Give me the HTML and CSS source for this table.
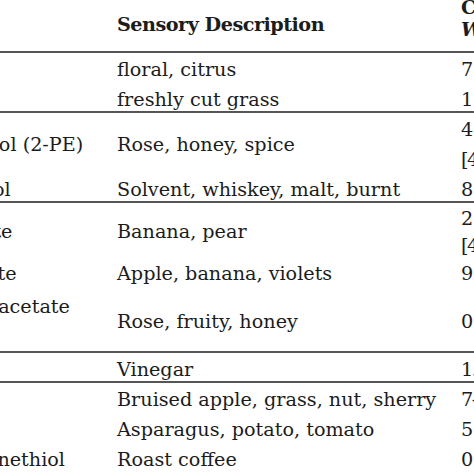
FILE: index.html
```html
<!DOCTYPE html>
<html>
<head>
<meta charset="utf-8">
<link rel="stylesheet" href="styles.css">
</head>
<body>
<div class="table">
  <div class="head">
    <div class="c1"></div>
    <div class="c2 hd">Sensory Description</div>
    <div class="c3 hd3"><div>Concentration in</div><div class="it">Wine (mg/L)</div></div>
  </div>
  <div class="group">
    <div class="c1"><span class="t">Linalool</span></div>
    <div class="c2"><span class="t">floral, citrus</span></div>
    <div class="c3"><span class="t">7</span></div>
    <div class="c1"><span class="t">cis-3-Hexenol</span></div>
    <div class="c2"><span class="t">freshly cut grass</span></div>
    <div class="c3"><span class="t">1</span></div>
  </div>
  <div class="group">
    <div class="c1"><span class="t">2-Phenylethanol <span class="nw">(2-PE)</span></span></div>
    <div class="c2"><span class="t">Rose, honey, spice</span></div>
    <div class="c3"><span class="t">4</span><br><span class="t">[4</span></div>
    <div class="c1"><span class="t">Isoamyl alcohol</span></div>
    <div class="c2"><span class="t">Solvent, whiskey, malt, burnt</span></div>
    <div class="c3"><span class="t">8</span></div>
  </div>
  <div class="group g3">
    <div class="c1"><span class="t">Isoamyl acetate</span></div>
    <div class="c2"><span class="t">Banana, pear</span></div>
    <div class="c3 tight"><span class="t">2</span><br><span class="t">[4</span></div>
    <div class="c1"><span class="t">Ethyl hexanoate</span></div>
    <div class="c2"><span class="t">Apple, banana, violets</span></div>
    <div class="c3"><span class="t">9</span></div>
    <div class="c1"><span class="t">2-Phenylethyl acetate <span class="nw">(2-PEA)</span></span></div>
    <div class="c2"><span class="t">Rose, fruity, honey</span></div>
    <div class="c3"><span class="t">0</span></div>
  </div>
  <div class="group">
    <div class="c1"><span class="t">Acetic acid</span></div>
    <div class="c2"><span class="t">Vinegar</span></div>
    <div class="c3"><span class="t">1.</span></div>
  </div>
  <div class="group">
    <div class="c1"><span class="t">Acetaldehyde</span></div>
    <div class="c2"><span class="t">Bruised apple, grass, nut, sherry</span></div>
    <div class="c3"><span class="t">7-</span></div>
    <div class="c1"><span class="t">Methional</span></div>
    <div class="c2"><span class="t">Asparagus, potato, tomato</span></div>
    <div class="c3"><span class="t">5</span></div>
    <div class="c1"><span class="t">2-Furanmethanethiol</span></div>
    <div class="c2"><span class="t">Roast coffee</span></div>
    <div class="c3"><span class="t">0</span></div>
  </div>
</div>
</body>
</html>
```

FILE: styles.css
```css
html, body {
  margin: 0;
  padding: 0;
  background: #ffffff;
}
body {
  width: 474px;
  height: 474px;
  overflow: hidden;
}
.table {
  margin-left: -141px;
  width: 903px;
  font-family: "DejaVu Serif", "Liberation Serif", serif;
  font-size: 19.2px;
  color: #1c1c1c;
}
.head, .group {
  display: grid;
  grid-template-columns: 258px 344px 300px;
}
.head {
  height: 52px;
}
.group {
  box-shadow: 0 -1px 0 #555555, inset 0 1px 0 #555555;
}
.g3 {
  grid-template-rows: 54px 30px 66px;
}
.c1, .c2, .c3 {
  line-height: 30px;
  align-self: center;
  white-space: nowrap;
}
.c1 {
  white-space: normal;
}
.c3 {
  letter-spacing: -1.5px;
}
.c3.tight {
  line-height: 27px;
}
.nw {
  white-space: nowrap;
}
.t {
  line-height: 20px;
  vertical-align: -3px;
}
.hd {
  align-self: start;
  padding-top: 10px;
  font-weight: bold;
  letter-spacing: -0.5px;
}
.hd3 {
  align-self: start;
  margin-top: -3px;
  line-height: 22px;
  font-weight: bold;
  letter-spacing: 0;
}
.it {
  font-style: italic;
}
```
